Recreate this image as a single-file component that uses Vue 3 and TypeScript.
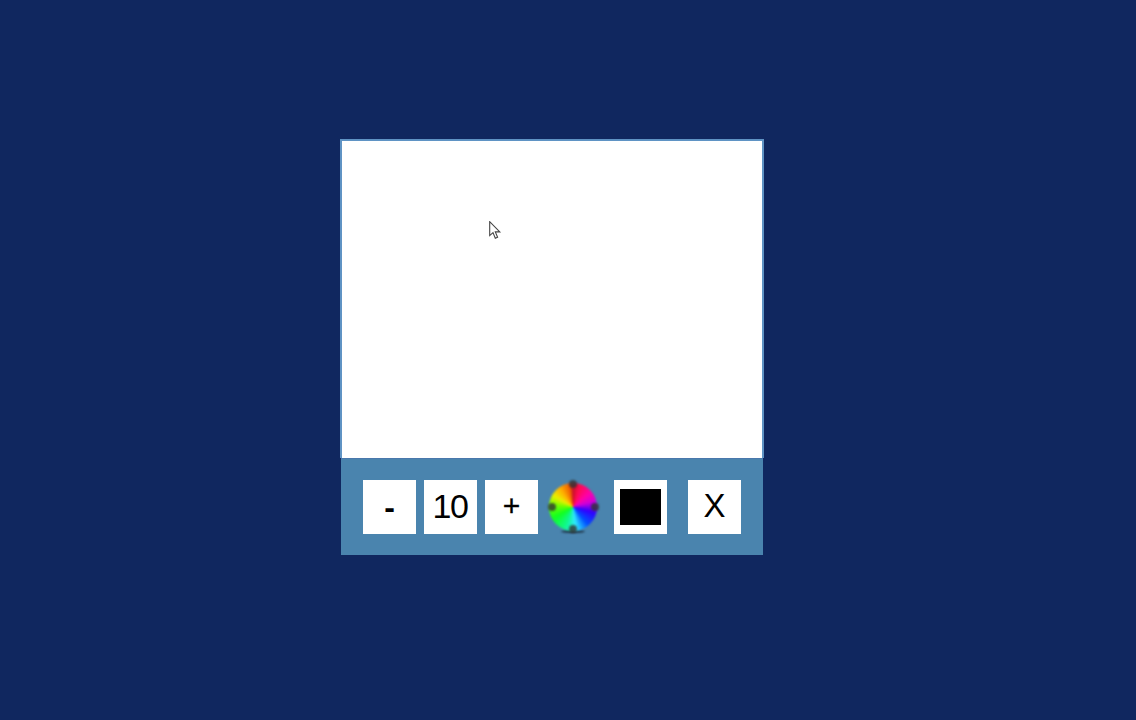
<script setup lang="ts">
const spots: string[] = ['top', 'right', 'bottom', 'left']
</script>

<template>
  <main class="page">
    <section class="paint">
      <div class="canvas">
        <svg class="cursor" width="13" height="19" viewBox="0 0 13 19" aria-hidden="true">
          <path d="M.7.7V14.600l3.300-3 2.300 5.600 2.300-1-2.300-5.300H10.800Z" fill="#fff" stroke="#444" stroke-width="1.100" stroke-linejoin="miter" />
        </svg>
      </div>
      <div class="toolbar">
        <button class="tool minus" type="button">-</button>
        <div class="tool size">10</div>
        <button class="tool plus" type="button">+</button>
        <div class="wheel">
          <div class="shadow"></div>
          <div class="disc"></div>
          <span v-for="s in spots" :key="s" class="spot" :class="s"></span>
        </div>
        <button class="tool swatch" type="button" aria-label="Current colour"><span></span></button>
        <button class="tool close" type="button">X</button>
      </div>
    </section>
  </main>
</template>

<style>
html, body { margin: 0; background: #10275f; }
</style>

<style scoped>
.page {
  box-sizing: border-box;
  width: 1136px;
  height: 720px;
  padding: 139px 372px 0 340px;
  background: #10275f;
  font-family: "Liberation Sans", Arial, sans-serif;
}
.paint {
  display: flex;
  flex-direction: column;
  align-items: center;
  width: 424px;
}
.canvas {
  position: relative;
  box-sizing: border-box;
  width: 424px;
  height: 319px;
  background: #fff;
  border: 2px solid #5f93c4;
  border-bottom-width: 0;
}
.cursor {
  position: absolute;
  left: 147px;
  top: 80px;
}
.toolbar {
  box-sizing: border-box;
  display: flex;
  align-items: flex-start;
  width: 422px;
  height: 97px;
  padding: 22px 0 0 22px;
  background: #4a84ae;
  border-top: 1px solid #4a78ac;
}
.tool {
  box-sizing: border-box;
  display: flex;
  align-items: center;
  justify-content: center;
  flex: none;
  width: 53px;
  height: 54px;
  margin: -1px 8px 0 0;
  padding: 0;
  border: 0;
  border-radius: 0;
  background: #fff;
  color: #000;
  font: 32px/1 "Liberation Sans", Arial, sans-serif;
}
.minus { font-weight: 700; }
.size {
  font-size: 34px;
  letter-spacing: -1.500px;
  padding: 0 1px 3px 0;
}
.plus {
  margin-right: 8px;
  font-size: 30px;
  padding-bottom: 2px;
  -webkit-text-stroke: 0.3px #000;
}
.wheel {
  position: relative;
  flex: none;
  width: 52px;
  height: 54px;
  margin: -1px 15px 0 1px;
}
.disc {
  position: absolute;
  left: 2px;
  top: 3px;
  width: 48px;
  height: 48px;
  border-radius: 50%;
  background: conic-gradient(from 0deg, #c8102a 0deg, #ff0a50 18deg, #ff00a8 50deg, #d000d8 75deg, #3000ff 105deg, #0050ff 140deg, #30e8ff 172deg, #10f890 200deg, #10ff20 240deg, #70ff00 275deg, #e8f000 300deg, #ffb000 325deg, #f06000 350deg, #c8102a 360deg);
  filter: blur(1px);
}
.shadow {
  position: absolute;
  left: 14px;
  top: 50px;
  width: 24px;
  height: 3px;
  border-radius: 50%;
  background: #1c3040;
  filter: blur(0.8px);
}
.spot {
  position: absolute;
  width: 8px;
  height: 8px;
  border-radius: 50%;
  background: #333;
  opacity: 0.8;
  filter: blur(1.200px);
}
.top { left: 22px; top: 0; }
.right { left: 44px; top: 23px; }
.bottom { left: 22px; top: 45px; }
.left { left: 1px; top: 23px; }
.swatch { margin-right: 21px; }
.swatch span {
  display: block;
  width: 41px;
  height: 36px;
  margin: -1px 0 0 -1px;
  background: #000;
}
.close {
  font-size: 33px;
  margin-right: 0;
  padding-bottom: 3px;
}
</style>
